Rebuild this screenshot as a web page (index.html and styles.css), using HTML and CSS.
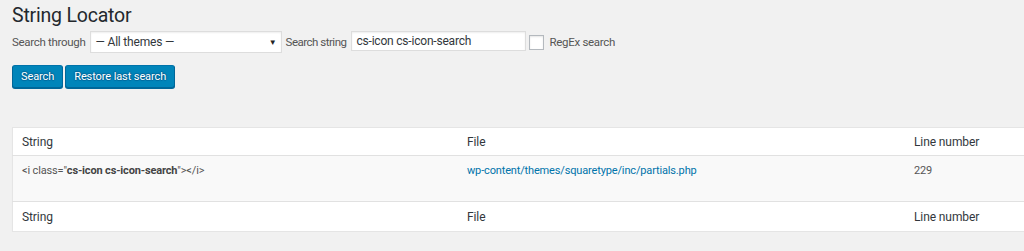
FILE: index.html
```html
<!DOCTYPE html>
<html>
<head>
<meta charset="utf-8">
<link rel="stylesheet" href="styles.css">
</head>
<body>
<div class="wrap">
  <h1 class="title">String Locator</h1>
  <form class="search-form">
    <div class="row">
      <label class="lbl">Search through</label>
      <div class="select">
        <span>— All themes —</span>
        <span class="arrow">▼</span>
      </div>
      <label class="lbl lbl-s">Search string</label>
      <div class="input">cs-icon cs-icon-search</div>
      <span class="check"></span>
      <label class="lbl">RegEx search</label>
    </div>
    <div class="buttons">
      <button type="button" class="btn">Search</button>
      <button type="button" class="btn">Restore last search</button>
    </div>
  </form>
  <table class="results">
    <thead>
      <tr><th class="c1">String</th><th class="c2">File</th><th class="c3">Line number</th></tr>
    </thead>
    <tbody>
      <tr>
        <td>&lt;i class="<strong>cs-icon cs-icon-search</strong>"&gt;&lt;/i&gt;</td>
        <td><a href="#">wp-content/themes/squaretype/inc/partials.php</a></td>
        <td>229</td>
      </tr>
    </tbody>
    <tfoot>
      <tr><th>String</th><th>File</th><th>Line number</th></tr>
    </tfoot>
  </table>
</div>
</body>
</html>
```

FILE: styles.css
```css
html, body {
  margin: 0;
  padding: 0;
  background: #f1f1f1;
  overflow: hidden;
}
body {
  font-family: Roboto, "Noto Sans", sans-serif;
  color: #444;
  font-size: 12px;
}
.wrap {
  padding-left: 12px;
  width: 1400px;
}
.title {
  margin: 0;
  padding-top: 2px;
  font-size: 19.5px;
  letter-spacing: -0.2px;
  font-weight: 400;
  line-height: 27px;
  color: #23282d;
  height: 29px;
}
.row {
  display: flex;
  align-items: center;
  height: 22px;
}
.lbl {
  color: #555;
  font-size: 11.5px;
  letter-spacing: -0.3px;
  margin-right: 4px;
  white-space: nowrap;
}
.lbl-s {
  letter-spacing: -0.5px;
  margin-right: 5px;
}
.select {
  background: #fff;
  border: 1px solid #ddd;
  display: flex;
  align-items: center;
  justify-content: space-between;
  padding: 0 4px 0 5px;
  box-sizing: border-box;
  flex: 0 0 192px;
  height: 22px;
  color: #32373c;
  font-size: 12px;
  letter-spacing: -0.2px;
  margin-right: 4px;
  box-shadow: inset 0 1px 2px rgba(0,0,0,.07);
}
.arrow {
  font-size: 8px;
  color: #222;
}
.input {
  flex: 0 0 175px;
  height: 20px;
  box-sizing: border-box;
  background: #fff;
  border: 1px solid #ddd;
  padding: 0 4px;
  font-size: 12px;
  letter-spacing: -0.2px;
  color: #32373c;
  line-height: 18px;
  margin-top: -2px;
  box-shadow: inset 0 1px 2px rgba(0,0,0,.07);
}
.check {
  flex: 0 0 auto;
  width: 13px;
  height: 13px;
  border: 1px solid #b4b9be;
  background: #fff;
  margin-left: 3px;
  margin-right: 5px;
  box-shadow: inset 0 1px 2px rgba(0,0,0,.1);
}
.buttons {
  display: flex;
  gap: 2px;
  margin-top: 12px;
}
.btn {
  font-family: inherit;
  height: 23px;
  padding: 0 8px;
  font-size: 11px;
  letter-spacing: -0.1px;
  color: #fff;
  background: #0085ba;
  border: 1px solid #0073aa;
  border-color: #0073aa #006799 #006799;
  border-radius: 3px;
  box-shadow: 0 1px 0 #006799;
  line-height: 21px;
  text-shadow: 0 -1px 1px #006799, 1px 0 1px #006799, 0 1px 1px #006799, -1px 0 1px #006799;
}
.results {
  margin-top: 39px;
  border-collapse: collapse;
  background: #fff;
  border: 1px solid #e5e5e5;
  box-shadow: 0 1px 1px rgba(0,0,0,.04);
  width: 1380px;
  table-layout: fixed;
}
.c1 { width: 427px; }
.c2 { width: 429px; }
.results th {
  text-align: left;
  font-weight: 400;
  font-size: 12px;
  letter-spacing: -0.1px;
  color: #32373c;
  padding: 0 9px;
}
.results thead th {
  height: 27px;
  border-bottom: 1px solid #e1e1e1;
}
.results tfoot th {
  height: 29px;
  border-top: 1px solid #e1e1e1;
}
.results tbody td {
  background: #f9f9f9;
  vertical-align: top;
  padding: 8px 9px 0;
  height: 37px;
  font-size: 11px;
  letter-spacing: -0.15px;
  color: #555;
}
.results tbody strong {
  font-weight: 700;
  color: #444;
}
.results a {
  color: #0073aa;
  text-decoration: none;
}
```
